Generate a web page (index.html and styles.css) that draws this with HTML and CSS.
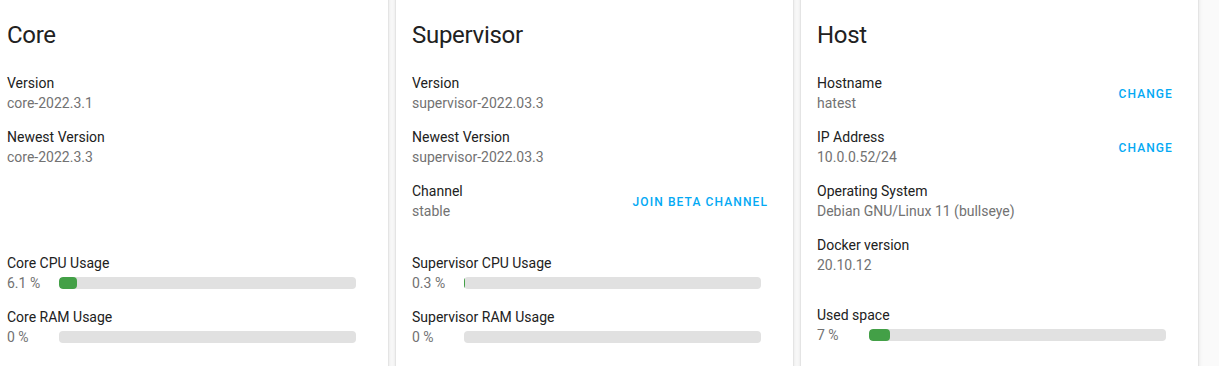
FILE: index.html
```html
<!DOCTYPE html>
<html lang="en">
<head>
<meta charset="utf-8">
<title>System</title>
<link rel="stylesheet" href="styles.css">
</head>
<body>
<div class="cards">
  <section class="card">
    <h1 class="card-title">Core</h1>
    <div class="row">
      <div class="info"><div class="label">Version</div><div class="value">core-2022.3.1</div></div>
    </div>
    <div class="row">
      <div class="info"><div class="label">Newest Version</div><div class="value">core-2022.3.3</div></div>
    </div>
    <div class="metrics">
      <div class="metric">
        <div class="label">Core CPU Usage</div>
        <div class="metric-line"><span class="metric-value">6.1 %</span><div class="bar"><div class="fill" style="width:6.1%"></div></div></div>
      </div>
      <div class="metric">
        <div class="label">Core RAM Usage</div>
        <div class="metric-line"><span class="metric-value">0 %</span><div class="bar"><div class="fill" style="width:0%"></div></div></div>
      </div>
    </div>
  </section>

  <section class="card">
    <h1 class="card-title">Supervisor</h1>
    <div class="row">
      <div class="info"><div class="label">Version</div><div class="value">supervisor-2022.03.3</div></div>
    </div>
    <div class="row">
      <div class="info"><div class="label">Newest Version</div><div class="value">supervisor-2022.03.3</div></div>
    </div>
    <div class="row">
      <div class="info"><div class="label">Channel</div><div class="value">stable</div></div>
      <button class="btn">Join beta channel</button>
    </div>
    <div class="metrics">
      <div class="metric">
        <div class="label">Supervisor CPU Usage</div>
        <div class="metric-line"><span class="metric-value">0.3 %</span><div class="bar"><div class="fill" style="width:0.3%"></div></div></div>
      </div>
      <div class="metric">
        <div class="label">Supervisor RAM Usage</div>
        <div class="metric-line"><span class="metric-value">0 %</span><div class="bar"><div class="fill" style="width:0%"></div></div></div>
      </div>
    </div>
  </section>

  <section class="card card-host">
    <h1 class="card-title">Host</h1>
    <div class="row">
      <div class="info"><div class="label">Hostname</div><div class="value">hatest</div></div>
      <button class="btn">Change</button>
    </div>
    <div class="row">
      <div class="info"><div class="label">IP Address</div><div class="value">10.0.0.52/24</div></div>
      <button class="btn">Change</button>
    </div>
    <div class="row">
      <div class="info"><div class="label">Operating System</div><div class="value">Debian GNU/Linux 11 (bullseye)</div></div>
    </div>
    <div class="row">
      <div class="info"><div class="label">Docker version</div><div class="value">20.10.12</div></div>
    </div>
    <div class="metrics">
      <div class="metric">
        <div class="label">Used space</div>
        <div class="metric-line"><span class="metric-value">7 %</span><div class="bar"><div class="fill" style="width:7%"></div></div></div>
      </div>
    </div>
  </section>
</div>
</body>
</html>
```

FILE: styles.css
```css
html, body {
  margin: 0;
  padding: 0;
  background: #fafafa;
  overflow: hidden;
  height: 366px;
}

body {
  font-family: Roboto, "Noto Sans", "Liberation Sans", sans-serif;
  color: #212121;
  -webkit-font-smoothing: antialiased;
}

.cards {
  display: grid;
  grid-template-columns: repeat(3, 397px);
  column-gap: 8px;
  margin-left: -9px;
  margin-top: -10px;
}

.card {
  box-sizing: border-box;
  height: 430px;
  background: #ffffff;
  border-radius: 4px;
  box-shadow: 0 2px 2px 0 rgba(0, 0, 0, 0.14), 0 1px 5px 0 rgba(0, 0, 0, 0.12), 0 3px 1px -2px rgba(0, 0, 0, 0.2);
  padding: 29px 16px 66px;
  display: flex;
  flex-direction: column;
}

.card-host {
  padding-bottom: 68px;
}

.card-title {
  margin: 0 0 15px;
  font-size: 24px;
  font-weight: 400;
  line-height: 32px;
  letter-spacing: -0.012em;
  color: #212121;
}

.row {
  box-sizing: border-box;
  height: 54px;
  padding: 7px 0;
  display: flex;
  align-items: center;
  justify-content: space-between;
}

.label {
  font-size: 14px;
  line-height: 20px;
  color: #212121;
}

.value {
  font-size: 14px;
  line-height: 20px;
  color: #727272;
}

.btn {
  border: none;
  background: transparent;
  font-family: Roboto, "Noto Sans", "Liberation Sans", sans-serif;
  font-size: 12px;
  font-weight: 500;
  letter-spacing: 1.1px;
  text-transform: uppercase;
  color: #03a9f4;
  height: 36px;
  padding: 1px 8px 0;
  margin-right: 1px;
  cursor: pointer;
}

.metrics {
  margin-top: auto;
}

.metric {
  box-sizing: border-box;
  height: 54px;
  padding: 7px 0;
}

.metric-line {
  display: flex;
  align-items: center;
  height: 20px;
}

.metric-value {
  width: 52px;
  flex: none;
  font-size: 14px;
  line-height: 20px;
  color: #727272;
}

.bar {
  flex: 1;
  margin-right: 16px;
  height: 12px;
  border-radius: 4px;
  background: #e1e1e1;
  overflow: hidden;
}

.fill {
  height: 100%;
  background: #43a047;
  border-radius: 4px;
}
```
